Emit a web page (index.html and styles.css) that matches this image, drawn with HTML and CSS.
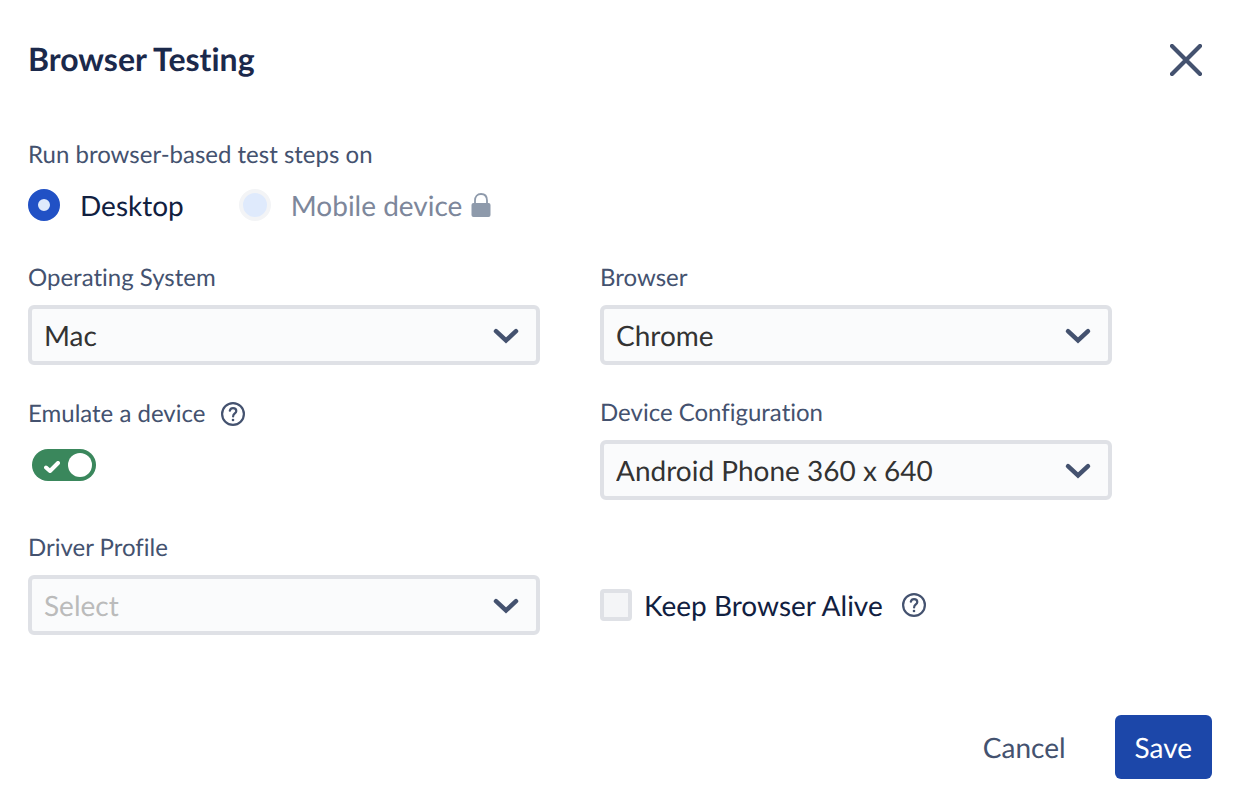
FILE: index.html
```html
<!DOCTYPE html>
<html lang="en">
<head>
<meta charset="utf-8">
<meta name="viewport" content="width=device-width, initial-scale=1">
<title>Browser Testing</title>
<link rel="stylesheet" href="styles.css">
</head>
<body>
<svg class="sprite" aria-hidden="true">
  <symbol id="chevron" viewBox="0 0 28 18"><path d="M4 4.200L14 13.500L24 4.200" fill="none" stroke="currentColor" stroke-width="4.500" stroke-linecap="round" stroke-linejoin="miter"/></symbol>
  <symbol id="help" viewBox="0 0 24 24"><circle cx="12" cy="12" r="10.900" fill="none" stroke="currentColor" stroke-width="2.200"/><path d="M8.800 8.700C9.200 7 10.400 6.100 12 6.100C13.900 6.100 15.300 7.300 15.300 9C15.300 11.400 12.100 11.500 12.100 14.400" fill="none" stroke="currentColor" stroke-width="2.200" stroke-linecap="round"/><circle cx="12" cy="18" r="1.300" fill="currentColor"/></symbol>
</svg>
<form class="dialog" role="dialog" aria-labelledby="title">
  <header class="dialog-header">
    <h1 class="dialog-title" id="title">Browser Testing</h1>
    <button class="icon-button" type="button" aria-label="Close">
      <svg class="close-icon" viewBox="0 0 32 32"><path d="M2 2L30 30M30 2L2 30" fill="none" stroke="currentColor" stroke-width="4.200" stroke-linecap="round"/></svg>
    </button>
  </header>

  <main class="dialog-body">
    <fieldset class="target">
      <legend class="label">Run browser-based test steps on</legend>
      <div class="radio-group">
        <label class="choice"><input class="radio" type="radio" name="target" checked>Desktop</label>
        <label class="choice choice-disabled"><input class="radio" type="radio" name="target" disabled><span class="locked">Mobile device<svg class="lock-icon" viewBox="0 0 20 24"><path d="M4 10V7.500C4 3.500 6.300 1 10 1S16 3.500 16 7.500V10" fill="none" stroke="currentColor" stroke-width="1.800"/><rect x="0.500" y="10" width="19" height="14" rx="2" fill="currentColor"/></svg></span></label>
      </div>
    </fieldset>

    <div class="fields">
      <div class="field">
        <label class="label" for="os">Operating System</label>
        <div class="select-wrap">
          <select class="select" id="os"><option>Mac</option></select>
          <svg class="chevron"><use href="#chevron"/></svg>
        </div>
      </div>
      <div class="field">
        <label class="label" for="browser">Browser</label>
        <div class="select-wrap">
          <select class="select" id="browser"><option>Chrome</option></select>
          <svg class="chevron"><use href="#chevron"/></svg>
        </div>
      </div>
      <div class="field field-switch">
        <div class="label-row">
          <label class="label" for="emulate">Emulate a device</label>
          <button class="icon-button" type="button" aria-label="About device emulation"><svg class="help-icon"><use href="#help"/></svg></button>
        </div>
        <div class="switch-wrap">
          <input class="switch" id="emulate" type="checkbox" role="switch" checked>
          <svg class="switch-check" viewBox="0 0 16 12"><path d="M2 6.500L6 10L14 2" fill="none" stroke="currentColor" stroke-width="4" stroke-linecap="round" stroke-linejoin="round"/></svg>
        </div>
      </div>
      <div class="field">
        <label class="label" for="device">Device Configuration</label>
        <div class="select-wrap">
          <select class="select" id="device"><option>Android Phone 360 x 640</option></select>
          <svg class="chevron"><use href="#chevron"/></svg>
        </div>
      </div>
      <div class="field">
        <label class="label" for="profile">Driver Profile</label>
        <div class="select-wrap">
          <select class="select select-empty" id="profile"><option value="">Select</option></select>
          <svg class="chevron"><use href="#chevron"/></svg>
        </div>
      </div>
      <div class="keep-alive">
        <label class="check-label"><input class="checkbox" type="checkbox">Keep Browser Alive</label>
        <button class="icon-button" type="button" aria-label="About keeping the browser alive"><svg class="help-icon"><use href="#help"/></svg></button>
      </div>
    </div>
  </main>

  <footer class="dialog-footer">
    <button class="button" type="button">Cancel</button>
    <button class="button button-primary" type="submit">Save</button>
  </footer>
</form>
</body>
</html>
```
FILE: styles.css
```css
*, *::before, *::after { box-sizing: border-box; }

body {
  margin: 0;
  background: #fff;
  color: #11203f;
  font-family: Lato, "Open Sans", sans-serif;
  font-size: 28px;
  line-height: 36px;
  font-variant-ligatures: none;
  text-rendering: geometricPrecision;
}

button, input, select {
  margin: 0;
  font: inherit;
  font-variant-ligatures: none;
  text-rendering: inherit;
}
svg { display: block; flex: none; }
.sprite { position: absolute; width: 0; height: 0; }

.dialog {
  display: flex;
  flex-direction: column;
  min-height: 100vh;
  padding: 36px 32px 17px 28px;
}

.dialog-header {
  display: flex;
  align-items: center;
  justify-content: space-between;
  height: 48px;
  padding-right: 10px;
}
.dialog-title {
  margin: 0;
  padding-bottom: 2px;
  color: #1b294b;
  font-size: 32px;
  font-weight: 700;
  line-height: 40px;
}

.icon-button {
  padding: 0;
  border: 0;
  background: none;
  color: #44526f;
  cursor: pointer;
}
.close-icon { width: 32px; height: 32px; }
.help-icon { width: 24px; height: 24px; overflow: visible; }

.dialog-body { flex: 1; padding: 55px 100px 0 0; }

.label {
  color: #44526f;
  font-size: 24px;
  line-height: 32px;
}

.target {
  min-width: 0;
  margin: 0;
  padding: 0;
  border: 0;
}
.target .label { padding: 0; }
.radio-group {
  display: flex;
  gap: 55px;
  padding-top: 16px;
}
.choice {
  display: flex;
  align-items: center;
  gap: 20px;
}
.choice-disabled { color: #7d879b; }
.locked {
  display: flex;
  align-items: center;
  gap: 9px;
}
.lock-icon { width: 20px; height: 24px; color: #8e9aab; }

.radio {
  appearance: none;
  flex: none;
  width: 32px;
  height: 32px;
  border: 4px solid #f3f4f6;
  border-radius: 50%;
  background: #dfeafc;
}
.radio:checked { border: 10px solid #2151c5; }

.fields {
  display: grid;
  grid-template-columns: 1fr 1fr;
  gap: 32px 60px;
  padding-top: 39px;
}
.field {
  display: flex;
  flex-direction: column;
  gap: 11px;
}
.field-switch { gap: 19px; padding-top: 1px; }
.label-row {
  display: flex;
  align-items: center;
  gap: 16px;
}

.select-wrap { position: relative; }
.select {
  appearance: none;
  display: block;
  width: 100%;
  height: 60px;
  padding: 0 60px 0 12px;
  border: 4px solid #dfe1e6;
  border-radius: 6px;
  background: #fafbfc;
  color: #333;
}
.select-empty { color: #bbb; }
.chevron {
  position: absolute;
  top: 22px;
  right: 20px;
  width: 28px;
  height: 18px;
  color: #44526f;
  pointer-events: none;
}

.switch-wrap {
  position: relative;
  width: 64px;
  margin: 0 4px;
}
.switch {
  appearance: none;
  display: flex;
  justify-content: flex-end;
  width: 64px;
  height: 32px;
  padding: 4px;
  border-radius: 16px;
  background: #3a875c;
}
.switch::before {
  content: "";
  width: 24px;
  height: 24px;
  border-radius: 50%;
  background: #fff;
}
.switch:not(:checked) { justify-content: flex-start; background: #7d879b; }
.switch:not(:checked) + .switch-check { display: none; }
.switch-check {
  position: absolute;
  top: 12px;
  left: 12px;
  width: 16px;
  height: 12px;
  color: #fff;
  pointer-events: none;
}

.keep-alive {
  display: flex;
  align-items: center;
  align-self: end;
  gap: 19px;
  height: 60px;
}
.check-label {
  display: flex;
  align-items: center;
  gap: 12px;
}
.checkbox {
  appearance: none;
  flex: none;
  width: 32px;
  height: 32px;
  border: 4px solid #dfe1e6;
  border-radius: 4px;
  background: #f4f5f7;
}
.checkbox:checked { background: #2151c5; }

.dialog-footer {
  display: flex;
  justify-content: flex-end;
  gap: 29px;
}
.button {
  height: 64px;
  padding: 0 20px;
  border: 0;
  border-radius: 6px;
  background: none;
  color: #44526f;
  cursor: pointer;
}
.button-primary { background: #1c47a9; color: #fff; }
```
